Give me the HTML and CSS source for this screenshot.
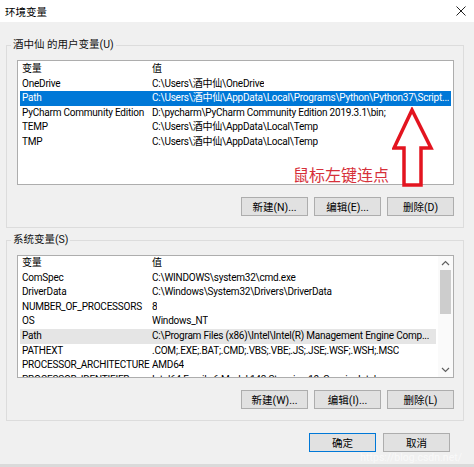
FILE: index.html
```html
<!DOCTYPE html>
<html lang="zh-CN">
  <head>
    <meta charset="UTF-8" />
    <meta name="viewport" content="width=device-width, initial-scale=1.0" />
    <title>环境变量</title>
    <link rel="stylesheet" href="styles.css">
  </head>
  <body>
    <div class="window">
      <!-- Barra de título -->
      <div class="titlebar">
        <span class="title">环境变量</span>
        <svg class="close" width="10" height="10" viewBox="0 0 10 10">
          <path d="M0.5 0.5 L9.5 9.5 M9.5 0.5 L0.5 9.5" stroke="#222" stroke-width="1" fill="none" />
        </svg>
      </div>

      <div class="content">
        <!-- Variáveis do usuário -->
        <fieldset class="group">
          <legend>酒中仙 的用户变量(U)</legend>
          <div class="listbox user-list">
            <div class="row head"><span class="name">变量</span><span class="value">值</span></div>
            <div class="row"><span class="name">OneDrive</span><span class="value">C:\Users\酒中仙\OneDrive</span></div>
            <div class="row selected"><span class="name">Path</span><span class="value">C:\Users\酒中仙\AppData\Local\Programs\Python\Python37\Script...</span></div>
            <div class="row"><span class="name">PyCharm Community Edition</span><span class="value">D:\pycharm\PyCharm Community Edition 2019.3.1\bin;</span></div>
            <div class="row"><span class="name">TEMP</span><span class="value">C:\Users\酒中仙\AppData\Local\Temp</span></div>
            <div class="row"><span class="name">TMP</span><span class="value">C:\Users\酒中仙\AppData\Local\Temp</span></div>

            <!-- anotação em vermelho -->
            <div class="note">鼠标左键连点</div>
            <svg class="arrow" width="42" height="82" viewBox="0 0 42 82">
              <polygon points="20,3 39,41 29,41 29,78 12,78 12,41 2,41" fill="#fff" stroke="#e3141f" stroke-width="3.5" stroke-linejoin="miter" />
            </svg>
          </div>
          <div class="buttons">
            <button>新建(N)...</button>
            <button>编辑(E)...</button>
            <button>删除(D)</button>
          </div>
        </fieldset>

        <!-- Variáveis do sistema -->
        <fieldset class="group">
          <legend>系统变量(S)</legend>
          <div class="listbox sys-list">
            <div class="rows">
              <div class="row head"><span class="name">变量</span><span class="value">值</span></div>
              <div class="row"><span class="name">ComSpec</span><span class="value">C:\WINDOWS\system32\cmd.exe</span></div>
              <div class="row"><span class="name">DriverData</span><span class="value">C:\Windows\System32\Drivers\DriverData</span></div>
              <div class="row"><span class="name">NUMBER_OF_PROCESSORS</span><span class="value">8</span></div>
              <div class="row"><span class="name">OS</span><span class="value">Windows_NT</span></div>
              <div class="row inactive"><span class="name">Path</span><span class="value">C:\Program Files (x86)\Intel\Intel(R) Management Engine Comp...</span></div>
              <div class="row"><span class="name">PATHEXT</span><span class="value">.COM;.EXE;.BAT;.CMD;.VBS;.VBE;.JS;.JSE;.WSF;.WSH;.MSC</span></div>
              <div class="row"><span class="name">PROCESSOR_ARCHITECTURE</span><span class="value">AMD64</span></div>
              <div class="row"><span class="name">PROCESSOR_IDENTIFIER</span><span class="value">Intel64 Family 6 Model 142 Stepping 10, GenuineIntel</span></div>
            </div>
            <div class="scrollbar">
              <svg class="chevron" width="9" height="6" viewBox="0 0 9 6"><path d="M1 5 L4.5 1.5 L8 5" stroke="#606060" fill="none" stroke-width="1.2" /></svg>
              <div class="track"><div class="thumb"></div></div>
              <svg class="chevron" width="9" height="6" viewBox="0 0 9 6"><path d="M1 1 L4.5 4.5 L8 1" stroke="#606060" fill="none" stroke-width="1.2" /></svg>
            </div>
          </div>
          <div class="buttons">
            <button>新建(W)...</button>
            <button>编辑(I)...</button>
            <button>删除(L)</button>
          </div>
        </fieldset>

        <!-- Botões finais -->
        <div class="footer">
          <button class="primary">确定</button>
          <button>取消</button>
          <span class="watermark">https://blog.csdn.net/</span>
        </div>
      </div>
    </div>
  </body>
</html>
```

FILE: styles.css
```css
/* Janela estilo Windows 10 */
body {
  margin: 0;
  font-family: Roboto, "Noto Sans CJK SC", sans-serif;
  font-size: 10px;
  color: #000;
  background: #f0f0f0;
}
.window {
  width: 474px;
  height: 467px;
  display: flex;
  flex-direction: column;
  background: #f0f0f0;
  box-sizing: border-box;
  border-bottom: 3px solid #dadada;
}
.titlebar {
  height: 22px;
  background: #fff;
  display: flex;
  align-items: center;
  justify-content: space-between;
  padding: 0 8px 0 5px;
  flex-shrink: 0;
}
.title {
  font-size: 10.5px;
}
.content {
  flex: 1;
  display: flex;
  flex-direction: column;
}
/* Caixa de grupo */
.group {
  margin: 15px 10px 0 6px;
  border: 1px solid #dcdcdc;
  padding: 7px 9px 11px 10px;
  min-width: 0;
}
.group + .group {
  margin-top: 4px;
}
.group legend {
  margin-left: -6px;
  padding: 0 2px;
  line-height: 16px;
  color: #111;
  font-size: 10.5px;
}
/* Lista */
.listbox {
  position: relative;
  background: #fff;
  border: 1px solid #adadad;
  padding-top: 1px;
}
.user-list {
  height: 122px;
}
.sys-list {
  height: 121px;
  display: flex;
  overflow: hidden;
  padding-top: 0;
}
.rows {
  flex: 1;
  min-width: 0;
}
.row {
  display: flex;
  height: 14.6px;
  line-height: 14.6px;
  margin: 0 2px;
  padding-left: 2px;
  white-space: nowrap;
  overflow: hidden;
  letter-spacing: -0.22px;
  font-size: 10px;
}
.row .name {
  width: 130px;
  flex-shrink: 0;
  overflow: hidden;
}
.row .value {
  overflow: hidden;
}
.row.selected {
  background: #0078d7;
  color: #fff;
}
.row.inactive {
  background: #e5e5e5;
}
.note {
  position: absolute;
  left: 275px;
  top: 104px;
  font-family: "Noto Sans CJK SC", sans-serif;
  font-size: 16px;
  line-height: 18px;
  color: #d6303a;
}
.arrow {
  position: absolute;
  left: 374px;
  top: 46px;
}
/* Barra de rolagem */
.scrollbar {
  width: 15px;
  display: flex;
  flex-direction: column;
  align-items: center;
  background: #fafafa;
}
.chevron {
  margin: 4px 0;
}
.track {
  flex: 1;
  width: 100%;
}
.thumb {
  height: 44px;
  background: #cdcdcd;
  margin: 0 2px;
}
/* Botões */
.buttons {
  display: flex;
  justify-content: flex-end;
  gap: 6px;
  margin-top: 12px;
}
button {
  width: 67px;
  height: 19px;
  padding: 0;
  border: 1px solid #adadad;
  background: #e1e1e1;
  font-family: Roboto, "Noto Sans CJK SC", sans-serif;
  font-size: 10.5px;
  color: #000;
}
button.primary {
  border-color: #0078d7;
}
.footer {
  position: relative;
  display: flex;
  justify-content: flex-end;
  gap: 7px;
  padding: 12px 24px 0 0;
}
.watermark {
  position: absolute;
  right: 12px;
  top: 30px;
  color: rgba(255, 255, 255, 0.6);
  font-size: 10.5px;
}
```
